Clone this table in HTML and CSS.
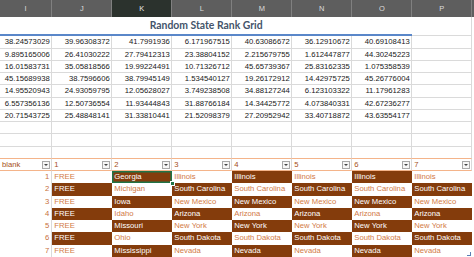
FILE: index.html
```html
<!DOCTYPE html>
<html>
<head>
<meta charset="utf-8">
<link rel="stylesheet" href="styles.css">
</head>
<body>
<div class="sheet">
  <div class="row hdr">
    <div class="cell">I</div><div class="cell">J</div><div class="cell cur">K</div><div class="cell">L</div><div class="cell">M</div><div class="cell">N</div><div class="cell">O</div><div class="cell">P</div>
  </div>
  <div class="row title-row">
    <div class="cell title">Random State Rank Grid</div><div class="cell"></div>
  </div>
  <div class="row">
    <div class="cell num">38.24573029</div><div class="cell num">39.96308372</div><div class="cell num">41.7991936</div><div class="cell num">6.171967515</div><div class="cell num">40.63086672</div><div class="cell num">36.12910672</div><div class="cell num">40.69108413</div><div class="cell"></div>
  </div>
  <div class="row">
    <div class="cell num">9.895165006</div><div class="cell num">26.41030222</div><div class="cell num">27.79412313</div><div class="cell num">23.38804152</div><div class="cell num">2.215679755</div><div class="cell num">1.612447877</div><div class="cell num">44.30245223</div><div class="cell"></div>
  </div>
  <div class="row">
    <div class="cell num">16.01583731</div><div class="cell num">35.05818566</div><div class="cell num">19.99224491</div><div class="cell num">10.71326712</div><div class="cell num">45.65739367</div><div class="cell num">25.83162335</div><div class="cell num">1.075358539</div><div class="cell"></div>
  </div>
  <div class="row">
    <div class="cell num">45.15689938</div><div class="cell num">38.7596606</div><div class="cell num">38.79945149</div><div class="cell num">1.534540127</div><div class="cell num">19.26172912</div><div class="cell num">14.42975725</div><div class="cell num">45.26776004</div><div class="cell"></div>
  </div>
  <div class="row">
    <div class="cell num">14.95520943</div><div class="cell num">24.93059795</div><div class="cell num">12.05628027</div><div class="cell num">3.749238508</div><div class="cell num">34.88127244</div><div class="cell num">6.123103322</div><div class="cell num">11.17961283</div><div class="cell"></div>
  </div>
  <div class="row">
    <div class="cell num">6.557356136</div><div class="cell num">12.50736554</div><div class="cell num">11.93444843</div><div class="cell num">31.88766184</div><div class="cell num">14.34425772</div><div class="cell num">4.073840331</div><div class="cell num">42.67236277</div><div class="cell"></div>
  </div>
  <div class="row">
    <div class="cell num">20.71543725</div><div class="cell num">25.48848141</div><div class="cell num">31.33810441</div><div class="cell num">21.52098379</div><div class="cell num">27.20952942</div><div class="cell num">33.40718872</div><div class="cell num">43.63554177</div><div class="cell"></div>
  </div>
  <div class="row">
    <div class="cell"></div><div class="cell"></div><div class="cell"></div><div class="cell"></div><div class="cell"></div><div class="cell"></div><div class="cell"></div><div class="cell"></div>
  </div>
  <div class="row">
    <div class="cell"></div><div class="cell"></div><div class="cell"></div><div class="cell"></div><div class="cell"></div><div class="cell"></div><div class="cell"></div><div class="cell"></div>
  </div>
  <div class="row pre">
    <div class="cell"></div><div class="cell"></div><div class="cell"></div><div class="cell"></div><div class="cell"></div><div class="cell"></div><div class="cell"></div><div class="cell"></div>
  </div>
  <div class="row thead">
    <div class="cell"><span>blank</span><span class="flt"></span></div>
    <div class="cell"><span>1</span><span class="flt"></span></div>
    <div class="cell"><span>2</span><span class="flt"></span></div>
    <div class="cell"><span>3</span><span class="flt"></span></div>
    <div class="cell"><span>4</span><span class="flt"></span></div>
    <div class="cell"><span>5</span><span class="flt"></span></div>
    <div class="cell"><span>6</span><span class="flt"></span></div>
    <div class="cell"><span>7</span><span class="flt"></span></div>
  </div>
  <div class="row">
    <div class="cell ti">1</div><div class="cell w">FREE</div><div class="cell b sel">Georgia</div><div class="cell w">Illinois</div><div class="cell b">Illinois</div><div class="cell w">Illinois</div><div class="cell b">Illinois</div><div class="cell w">Illinois</div>
  </div>
  <div class="row">
    <div class="cell ti">2</div><div class="cell b">FREE</div><div class="cell w">Michigan</div><div class="cell b">South Carolina</div><div class="cell w">South Carolina</div><div class="cell b">South Carolina</div><div class="cell w">South Carolina</div><div class="cell b">South Carolina</div>
  </div>
  <div class="row">
    <div class="cell ti">3</div><div class="cell w">FREE</div><div class="cell b">Iowa</div><div class="cell w">New Mexico</div><div class="cell b">New Mexico</div><div class="cell w">New Mexico</div><div class="cell b">New Mexico</div><div class="cell w">New Mexico</div>
  </div>
  <div class="row">
    <div class="cell ti">4</div><div class="cell b">FREE</div><div class="cell w">Idaho</div><div class="cell b">Arizona</div><div class="cell w">Arizona</div><div class="cell b">Arizona</div><div class="cell w">Arizona</div><div class="cell b">Arizona</div>
  </div>
  <div class="row">
    <div class="cell ti">5</div><div class="cell w">FREE</div><div class="cell b">Missouri</div><div class="cell w">New York</div><div class="cell b">New York</div><div class="cell w">New York</div><div class="cell b">New York</div><div class="cell w">New York</div>
  </div>
  <div class="row">
    <div class="cell ti">6</div><div class="cell b">FREE</div><div class="cell w">Ohio</div><div class="cell b">South Dakota</div><div class="cell w">South Dakota</div><div class="cell b">South Dakota</div><div class="cell w">South Dakota</div><div class="cell b">South Dakota</div>
  </div>
  <div class="row">
    <div class="cell ti">7</div><div class="cell w">FREE</div><div class="cell b">Mississippi</div><div class="cell w">Nevada</div><div class="cell b">Nevada</div><div class="cell w">Nevada</div><div class="cell b">Nevada</div><div class="cell w last">Nevada</div>
  </div>
</div>
</body>
</html>
```

FILE: styles.css
```css
html, body {
  margin: 0;
  padding: 0;
  background: #ffffff;
}

body {
  font-family: "Liberation Sans", Arial, sans-serif;
}

.sheet {
  width: 474px;
  height: 257px;
  overflow: hidden;
}

.row {
  display: grid;
  grid-template-columns: 52.3px repeat(8, 60px);
  height: 12.25px;
}

.cell {
  box-sizing: border-box;
  border-right: 1px solid #dadada;
  border-bottom: 1px solid #dadada;
  font-size: 7.7px;
  line-height: 11.5px;
  white-space: nowrap;
  overflow: hidden;
  padding: 0 2px;
  color: #1e1e1e;
}

/* column header */
.hdr {
  height: 17px;
  background: #5e5e5e;
}

.hdr .cell {
  border-right: 1px solid #808080;
  border-bottom: none;
  color: #dcdcdc;
  text-align: center;
  line-height: 17px;
  font-size: 7.5px;
}

.hdr .cur {
  background: #2b322d;
  color: #e6e6e6;
}

/* title */
.title-row {
  height: 19.4px;
}

.title {
  grid-column: span 7;
  border-right: none;
  border-bottom: 2px solid #5a87c9;
  font-family: Lato, "Liberation Sans", sans-serif;
  font-weight: bold;
  color: #44546a;
  font-size: 10.4px;
  line-height: 17.4px;
  text-align: center;
  padding: 0;
}

.num {
  text-align: right;
  padding-right: 1.6px;
  color: #202020;
}

/* table */
.pre .cell {
  border-bottom-color: #f4b48a;
}

.thead .cell {
  display: flex;
  align-items: center;
  justify-content: space-between;
  border-bottom-color: #f4b48a;
  color: #a64f22;
  padding-right: 1.5px;
}

.flt {
  box-sizing: border-box;
  width: 8px;
  height: 8px;
  border: 1px solid #a8a8a8;
  background: #f6f6f6;
  display: flex;
  align-items: center;
  justify-content: center;
}

.flt::before {
  content: "";
  border-left: 2px solid transparent;
  border-right: 2px solid transparent;
  border-top: 2px solid #444;
}

.ti {
  text-align: right;
  color: #c8703c;
  border-bottom: none;
  line-height: 12.25px;
}

.w {
  background: #ffffff;
  color: #d27a45;
  border: none;
  line-height: 12.25px;
}

.b {
  background: #843c0c;
  color: #ffffff;
  border: none;
  line-height: 12.25px;
}

.sel {
  position: relative;
  overflow: visible;
  z-index: 1;
  box-shadow: inset 0 0 0 1.5px #217346;
}

.sel::after {
  content: "";
  position: absolute;
  right: -2.5px;
  bottom: -2.5px;
  width: 3px;
  height: 3px;
  background: #217346;
  border: 1px solid #ffffff;
}

.last {
  position: relative;
}

.last::after {
  content: "";
  position: absolute;
  right: 1px;
  bottom: 1px;
  width: 3px;
  height: 3px;
  border-right: 1px solid #5a7fb5;
  border-bottom: 1px solid #5a7fb5;
}
```
